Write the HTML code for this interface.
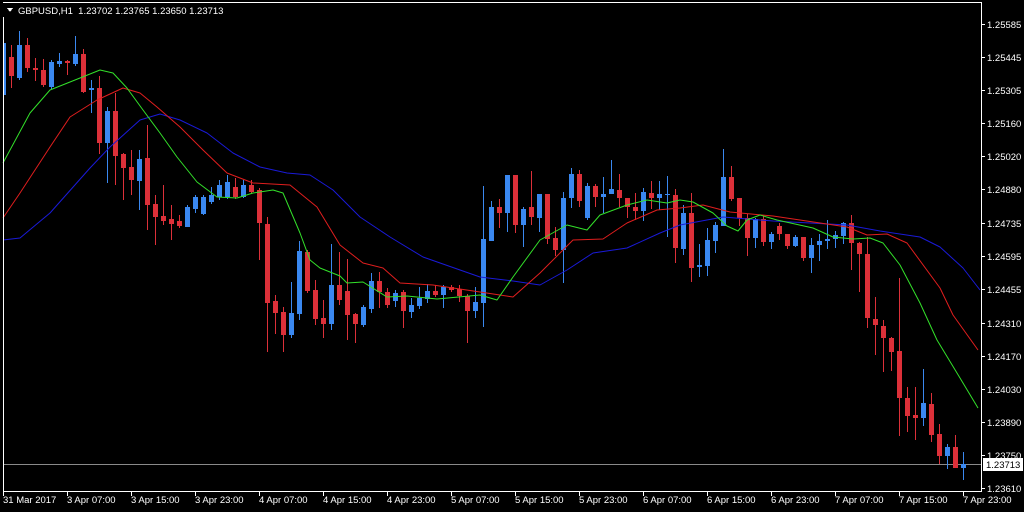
<!DOCTYPE html>
<html><head><meta charset="utf-8"><style>
html,body{margin:0;padding:0;background:#000;}
svg{display:block}
text{font-family:"Liberation Sans",sans-serif;font-size:9.5px;fill:#fff}
.r{fill:#dc3039}.b{fill:#3a88f0}
</style></head><body>
<svg width="1024" height="512" viewBox="0 0 1024 512" xmlns="http://www.w3.org/2000/svg" shape-rendering="crispEdges">
<rect width="1024" height="512" fill="#000"/>
<rect x="3" y="464" width="978" height="1" fill="#8a8a8a"/>
<g id="c">
<rect class="b" x="3" y="27" width="1" height="71"/><rect class="b" x="3" y="43" width="3" height="52"/>
<rect class="r" x="11" y="45" width="1" height="43"/><rect class="r" x="9" y="57" width="5" height="19"/>
<rect class="b" x="19" y="31" width="1" height="49"/><rect class="b" x="17" y="45" width="5" height="33"/>
<rect class="r" x="27" y="38" width="1" height="34"/><rect class="r" x="25" y="45" width="5" height="23"/>
<rect class="r" x="35" y="58" width="1" height="23"/><rect class="r" x="33" y="68" width="5" height="2"/>
<rect class="r" x="43" y="59" width="1" height="28"/><rect class="r" x="41" y="70" width="5" height="15"/>
<rect class="b" x="51" y="60" width="1" height="29"/><rect class="b" x="49" y="62" width="5" height="25"/>
<rect class="b" x="59" y="53" width="1" height="14"/><rect class="b" x="57" y="61" width="5" height="3"/>
<rect class="r" x="67" y="60" width="1" height="15"/><rect class="r" x="65" y="61" width="5" height="2"/>
<rect class="b" x="75" y="36" width="1" height="30"/><rect class="b" x="73" y="54" width="5" height="10"/>
<rect class="r" x="83" y="49" width="1" height="44"/><rect class="r" x="81" y="54" width="5" height="38"/>
<rect class="b" x="91" y="80" width="1" height="33"/><rect class="b" x="89" y="88" width="5" height="2"/>
<rect class="r" x="99" y="76" width="1" height="78"/><rect class="r" x="97" y="88" width="5" height="55"/>
<rect class="b" x="107" y="107" width="1" height="76"/><rect class="b" x="105" y="111" width="5" height="32"/>
<rect class="r" x="115" y="93" width="1" height="92"/><rect class="r" x="113" y="111" width="5" height="45"/>
<rect class="r" x="123" y="153" width="1" height="47"/><rect class="r" x="121" y="154" width="5" height="14"/>
<rect class="r" x="131" y="150" width="1" height="45"/><rect class="r" x="129" y="167" width="5" height="13"/>
<rect class="b" x="139" y="150" width="1" height="60"/><rect class="b" x="137" y="159" width="5" height="22"/>
<rect class="r" x="147" y="125" width="1" height="105"/><rect class="r" x="145" y="158" width="5" height="47"/>
<rect class="r" x="155" y="195" width="1" height="50"/><rect class="r" x="153" y="204" width="5" height="13"/>
<rect class="r" x="163" y="185" width="1" height="40"/><rect class="r" x="161" y="216" width="5" height="5"/>
<rect class="r" x="171" y="205" width="1" height="35"/><rect class="r" x="169" y="219" width="5" height="5"/>
<rect class="r" x="179" y="215" width="1" height="13"/><rect class="r" x="177" y="221" width="5" height="5"/>
<rect class="b" x="187" y="205" width="1" height="22"/><rect class="b" x="185" y="207" width="5" height="20"/>
<rect class="b" x="195" y="195" width="1" height="18"/><rect class="b" x="193" y="197" width="5" height="12"/>
<rect class="b" x="203" y="195" width="1" height="20"/><rect class="b" x="201" y="197" width="5" height="17"/>
<rect class="b" x="211" y="187" width="1" height="17"/><rect class="b" x="209" y="195" width="5" height="7"/>
<rect class="b" x="219" y="180" width="1" height="20"/><rect class="b" x="217" y="185" width="5" height="12"/>
<rect class="b" x="227" y="175" width="1" height="24"/><rect class="b" x="225" y="182" width="5" height="15"/>
<rect class="r" x="235" y="178" width="1" height="21"/><rect class="r" x="233" y="187" width="5" height="10"/>
<rect class="b" x="243" y="180" width="1" height="18"/><rect class="b" x="241" y="185" width="5" height="12"/>
<rect class="r" x="251" y="180" width="1" height="14"/><rect class="r" x="249" y="185" width="5" height="7"/>
<rect class="r" x="259" y="188" width="1" height="72"/><rect class="r" x="257" y="190" width="5" height="33"/>
<rect class="r" x="267" y="217" width="1" height="135"/><rect class="r" x="265" y="224" width="5" height="79"/>
<rect class="r" x="275" y="295" width="1" height="39"/><rect class="r" x="273" y="301" width="5" height="12"/>
<rect class="r" x="283" y="307" width="1" height="45"/><rect class="r" x="281" y="312" width="5" height="23"/>
<rect class="b" x="291" y="282" width="1" height="56"/><rect class="b" x="289" y="313" width="5" height="22"/>
<rect class="b" x="299" y="241" width="1" height="79"/><rect class="b" x="297" y="251" width="5" height="63"/>
<rect class="r" x="307" y="250" width="1" height="43"/><rect class="r" x="305" y="252" width="5" height="39"/>
<rect class="r" x="315" y="280" width="1" height="45"/><rect class="r" x="313" y="290" width="5" height="29"/>
<rect class="r" x="323" y="300" width="1" height="38"/><rect class="r" x="321" y="318" width="5" height="6"/>
<rect class="b" x="331" y="244" width="1" height="86"/><rect class="b" x="329" y="285" width="5" height="39"/>
<rect class="r" x="339" y="252" width="1" height="53"/><rect class="r" x="337" y="285" width="5" height="15"/>
<rect class="r" x="347" y="259" width="1" height="81"/><rect class="r" x="345" y="291" width="5" height="24"/>
<rect class="r" x="355" y="313" width="1" height="30"/><rect class="r" x="353" y="314" width="5" height="10"/>
<rect class="b" x="363" y="305" width="1" height="22"/><rect class="b" x="361" y="307" width="5" height="18"/>
<rect class="b" x="371" y="273" width="1" height="40"/><rect class="b" x="369" y="281" width="5" height="28"/>
<rect class="r" x="379" y="272" width="1" height="36"/><rect class="r" x="377" y="281" width="5" height="11"/>
<rect class="r" x="387" y="288" width="1" height="20"/><rect class="r" x="385" y="292" width="5" height="13"/>
<rect class="b" x="395" y="290" width="1" height="17"/><rect class="b" x="393" y="293" width="5" height="8"/>
<rect class="r" x="403" y="290" width="1" height="38"/><rect class="r" x="401" y="292" width="5" height="19"/>
<rect class="b" x="411" y="298" width="1" height="20"/><rect class="b" x="409" y="305" width="5" height="7"/>
<rect class="b" x="419" y="287" width="1" height="22"/><rect class="b" x="417" y="298" width="5" height="8"/>
<rect class="b" x="427" y="284" width="1" height="19"/><rect class="b" x="425" y="291" width="5" height="8"/>
<rect class="r" x="435" y="285" width="1" height="12"/><rect class="r" x="433" y="291" width="5" height="4"/>
<rect class="b" x="443" y="285" width="1" height="23"/><rect class="b" x="441" y="287" width="5" height="8"/>
<rect class="r" x="451" y="285" width="1" height="7"/><rect class="r" x="449" y="287" width="5" height="3"/>
<rect class="r" x="459" y="285" width="1" height="17"/><rect class="r" x="457" y="289" width="5" height="7"/>
<rect class="r" x="467" y="294" width="1" height="49"/><rect class="r" x="465" y="296" width="5" height="15"/>
<rect class="b" x="475" y="287" width="1" height="31"/><rect class="b" x="473" y="302" width="5" height="9"/>
<rect class="b" x="483" y="186" width="1" height="141"/><rect class="b" x="481" y="239" width="5" height="64"/>
<rect class="b" x="491" y="201" width="1" height="40"/><rect class="b" x="489" y="207" width="5" height="34"/>
<rect class="r" x="499" y="199" width="1" height="29"/><rect class="r" x="497" y="207" width="5" height="6"/>
<rect class="b" x="507" y="175" width="1" height="57"/><rect class="b" x="505" y="175" width="5" height="38"/>
<rect class="r" x="515" y="175" width="1" height="58"/><rect class="r" x="513" y="175" width="5" height="50"/>
<rect class="b" x="523" y="207" width="1" height="40"/><rect class="b" x="521" y="209" width="5" height="16"/>
<rect class="r" x="531" y="171" width="1" height="54"/><rect class="r" x="529" y="207" width="5" height="10"/>
<rect class="b" x="539" y="194" width="1" height="38"/><rect class="b" x="537" y="194" width="5" height="24"/>
<rect class="r" x="547" y="194" width="1" height="50"/><rect class="r" x="545" y="194" width="5" height="45"/>
<rect class="r" x="555" y="227" width="1" height="29"/><rect class="r" x="553" y="238" width="5" height="12"/>
<rect class="b" x="563" y="192" width="1" height="91"/><rect class="b" x="561" y="198" width="5" height="52"/>
<rect class="b" x="571" y="168" width="1" height="40"/><rect class="b" x="569" y="174" width="5" height="24"/>
<rect class="r" x="579" y="170" width="1" height="37"/><rect class="r" x="577" y="174" width="5" height="27"/>
<rect class="b" x="587" y="183" width="1" height="37"/><rect class="b" x="585" y="186" width="5" height="32"/>
<rect class="r" x="595" y="184" width="1" height="23"/><rect class="r" x="593" y="186" width="5" height="11"/>
<rect class="b" x="603" y="177" width="1" height="36"/><rect class="b" x="601" y="194" width="5" height="3"/>
<rect class="b" x="611" y="160" width="1" height="34"/><rect class="b" x="609" y="189" width="5" height="5"/>
<rect class="r" x="619" y="174" width="1" height="33"/><rect class="r" x="617" y="190" width="5" height="8"/>
<rect class="r" x="627" y="198" width="1" height="20"/><rect class="r" x="625" y="198" width="5" height="9"/>
<rect class="r" x="635" y="193" width="1" height="27"/><rect class="r" x="633" y="207" width="5" height="4"/>
<rect class="b" x="643" y="188" width="1" height="33"/><rect class="b" x="641" y="192" width="5" height="19"/>
<rect class="r" x="651" y="181" width="1" height="28"/><rect class="r" x="649" y="193" width="5" height="5"/>
<rect class="b" x="659" y="181" width="1" height="29"/><rect class="b" x="657" y="194" width="5" height="4"/>
<rect class="b" x="667" y="176" width="1" height="61"/><rect class="b" x="665" y="194" width="5" height="1"/>
<rect class="r" x="675" y="189" width="1" height="74"/><rect class="r" x="673" y="195" width="5" height="53"/>
<rect class="b" x="683" y="205" width="1" height="50"/><rect class="b" x="681" y="213" width="5" height="36"/>
<rect class="r" x="691" y="193" width="1" height="89"/><rect class="r" x="689" y="213" width="5" height="55"/>
<rect class="b" x="699" y="244" width="1" height="33"/><rect class="b" x="697" y="265" width="5" height="2"/>
<rect class="b" x="707" y="228" width="1" height="48"/><rect class="b" x="705" y="240" width="5" height="26"/>
<rect class="b" x="715" y="222" width="1" height="31"/><rect class="b" x="713" y="225" width="5" height="16"/>
<rect class="b" x="723" y="149" width="1" height="77"/><rect class="b" x="721" y="177" width="5" height="49"/>
<rect class="r" x="731" y="166" width="1" height="35"/><rect class="r" x="729" y="177" width="5" height="22"/>
<rect class="r" x="739" y="198" width="1" height="28"/><rect class="r" x="737" y="198" width="5" height="20"/>
<rect class="r" x="747" y="214" width="1" height="42"/><rect class="r" x="745" y="218" width="5" height="20"/>
<rect class="b" x="755" y="218" width="1" height="30"/><rect class="b" x="753" y="219" width="5" height="19"/>
<rect class="r" x="763" y="216" width="1" height="30"/><rect class="r" x="761" y="219" width="5" height="23"/>
<rect class="b" x="771" y="232" width="1" height="17"/><rect class="b" x="769" y="234" width="5" height="8"/>
<rect class="r" x="779" y="223" width="1" height="17"/><rect class="r" x="777" y="226" width="5" height="8"/>
<rect class="r" x="787" y="234" width="1" height="15"/><rect class="r" x="785" y="234" width="5" height="12"/>
<rect class="b" x="795" y="235" width="1" height="12"/><rect class="b" x="793" y="237" width="5" height="9"/>
<rect class="r" x="803" y="237" width="1" height="24"/><rect class="r" x="801" y="237" width="5" height="21"/>
<rect class="b" x="811" y="238" width="1" height="35"/><rect class="b" x="809" y="245" width="5" height="13"/>
<rect class="b" x="819" y="234" width="1" height="27"/><rect class="b" x="817" y="241" width="5" height="4"/>
<rect class="b" x="827" y="220" width="1" height="29"/><rect class="b" x="825" y="239" width="5" height="2"/>
<rect class="b" x="835" y="231" width="1" height="17"/><rect class="b" x="833" y="235" width="5" height="4"/>
<rect class="b" x="843" y="222" width="1" height="22"/><rect class="b" x="841" y="223" width="5" height="13"/>
<rect class="r" x="851" y="215" width="1" height="55"/><rect class="r" x="849" y="223" width="5" height="20"/>
<rect class="r" x="859" y="242" width="1" height="50"/><rect class="r" x="857" y="243" width="5" height="11"/>
<rect class="r" x="867" y="237" width="1" height="91"/><rect class="r" x="865" y="254" width="5" height="64"/>
<rect class="r" x="875" y="297" width="1" height="58"/><rect class="r" x="873" y="319" width="5" height="6"/>
<rect class="r" x="883" y="320" width="1" height="52"/><rect class="r" x="881" y="326" width="5" height="12"/>
<rect class="r" x="891" y="337" width="1" height="34"/><rect class="r" x="889" y="338" width="5" height="14"/>
<rect class="r" x="899" y="278" width="1" height="158"/><rect class="r" x="897" y="351" width="5" height="47"/>
<rect class="r" x="907" y="387" width="1" height="45"/><rect class="r" x="905" y="398" width="5" height="18"/>
<rect class="r" x="915" y="387" width="1" height="53"/><rect class="r" x="913" y="415" width="5" height="3"/>
<rect class="b" x="923" y="369" width="1" height="57"/><rect class="b" x="921" y="403" width="5" height="15"/>
<rect class="r" x="931" y="393" width="1" height="49"/><rect class="r" x="929" y="404" width="5" height="31"/>
<rect class="r" x="939" y="424" width="1" height="40"/><rect class="r" x="937" y="434" width="5" height="22"/>
<rect class="b" x="947" y="444" width="1" height="25"/><rect class="b" x="945" y="447" width="5" height="9"/>
<rect class="r" x="955" y="435" width="1" height="33"/><rect class="r" x="953" y="447" width="5" height="21"/>
<rect class="b" x="963" y="452" width="1" height="28"/><rect class="b" x="961" y="464" width="5" height="4"/>
</g>
<g fill="none" stroke-width="1" shape-rendering="auto" stroke-linejoin="round">
<polyline stroke="#1a1ad8" points="3,240 20,238 50,213 90,168 110,147 140,120 160,114 180,120 207,133 233,153 260,167 287,173 310,175 333,190 340,197 360,217 390,237 423,257 480,277 513,281 540,285 567,270 593,253 627,248 660,233 680,225 723,217 773,221 847,225 880,231 920,237 940,247 963,268 980,290"/>
<polyline stroke="#e01e1e" points="3,218 20,193 50,147 70,117 97,100 123,88 140,93 157,107 180,127 203,150 227,173 253,183 290,185 317,207 340,245 363,263 383,268 400,283 433,285 480,292 513,297 540,273 573,240 603,239 627,223 657,210 680,208 703,205 730,212 773,216 847,227 867,235 887,234 907,243 940,288 953,315 978,350"/>
<polyline stroke="#33e02a" points="3,163 30,113 50,90 80,78 100,70 113,73 127,88 143,110 160,133 177,157 197,182 217,197 237,198 253,193 273,190 283,193 300,233 310,260 320,268 340,276 347,283 363,282 387,297 407,296 437,299 480,295 497,300 513,277 540,240 567,225 587,230 600,215 627,205 647,200 667,203 680,200 693,202 713,213 727,226 738,231 747,220 760,215 777,220 813,228 833,237 853,239 870,238 883,243 900,265 920,303 937,340 960,378 978,408"/>
</g>
<rect x="3" y="2" width="978" height="1" fill="#fff"/>
<rect x="3" y="2" width="1" height="490" fill="#fff"/>
<rect x="981" y="2" width="1" height="490" fill="#fff"/>
<rect x="3" y="491" width="979" height="1" fill="#fff"/>
<rect x="0" y="3" width="224" height="14" fill="#000"/>
<polygon points="7,8 13,8 10,12" fill="#fff"/>
<text x="18" y="14" xml:space="preserve" style="white-space:pre">GBPUSD,H1  1.23702 1.23765 1.23650 1.23713</text>
<g fill="#fff">
<rect x="982" y="24" width="3" height="1"/><rect x="982" y="57" width="3" height="1"/><rect x="982" y="90" width="3" height="1"/><rect x="982" y="123" width="3" height="1"/><rect x="982" y="156" width="3" height="1"/><rect x="982" y="189" width="3" height="1"/><rect x="982" y="223" width="3" height="1"/><rect x="982" y="256" width="3" height="1"/><rect x="982" y="289" width="3" height="1"/><rect x="982" y="323" width="3" height="1"/><rect x="982" y="356" width="3" height="1"/><rect x="982" y="389" width="3" height="1"/><rect x="982" y="422" width="3" height="1"/><rect x="982" y="455" width="3" height="1"/><rect x="982" y="488" width="3" height="1"/>
</g>
<text x="987" y="28">1.25585</text>
<text x="987" y="61">1.25445</text>
<text x="987" y="94">1.25305</text>
<text x="987" y="127">1.25160</text>
<text x="987" y="160">1.25020</text>
<text x="987" y="193">1.24880</text>
<text x="987" y="227">1.24735</text>
<text x="987" y="260">1.24595</text>
<text x="987" y="293">1.24455</text>
<text x="987" y="327">1.24310</text>
<text x="987" y="360">1.24170</text>
<text x="987" y="393">1.24030</text>
<text x="987" y="426">1.23890</text>
<text x="987" y="459">1.23750</text>
<text x="987" y="492">1.23610</text>
<rect x="983" y="458" width="40" height="13" fill="#fff"/>
<text x="986" y="468" style="fill:#000">1.23713</text>
<g fill="#fff">
<rect x="3" y="492" width="1" height="4"/><rect x="67" y="492" width="1" height="4"/><rect x="131" y="492" width="1" height="4"/><rect x="195" y="492" width="1" height="4"/><rect x="259" y="492" width="1" height="4"/><rect x="323" y="492" width="1" height="4"/><rect x="387" y="492" width="1" height="4"/><rect x="451" y="492" width="1" height="4"/><rect x="515" y="492" width="1" height="4"/><rect x="579" y="492" width="1" height="4"/><rect x="643" y="492" width="1" height="4"/><rect x="707" y="492" width="1" height="4"/><rect x="771" y="492" width="1" height="4"/><rect x="835" y="492" width="1" height="4"/><rect x="899" y="492" width="1" height="4"/><rect x="963" y="492" width="1" height="4"/>
</g>
<text x="3" y="503">31 Mar 2017</text>
<text x="67" y="503">3 Apr 07:00</text>
<text x="131" y="503">3 Apr 15:00</text>
<text x="195" y="503">3 Apr 23:00</text>
<text x="259" y="503">4 Apr 07:00</text>
<text x="323" y="503">4 Apr 15:00</text>
<text x="387" y="503">4 Apr 23:00</text>
<text x="451" y="503">5 Apr 07:00</text>
<text x="515" y="503">5 Apr 15:00</text>
<text x="579" y="503">5 Apr 23:00</text>
<text x="643" y="503">6 Apr 07:00</text>
<text x="707" y="503">6 Apr 15:00</text>
<text x="771" y="503">6 Apr 23:00</text>
<text x="835" y="503">7 Apr 07:00</text>
<text x="899" y="503">7 Apr 15:00</text>
<text x="963" y="503">7 Apr 23:00</text>
</svg>
</body></html>
